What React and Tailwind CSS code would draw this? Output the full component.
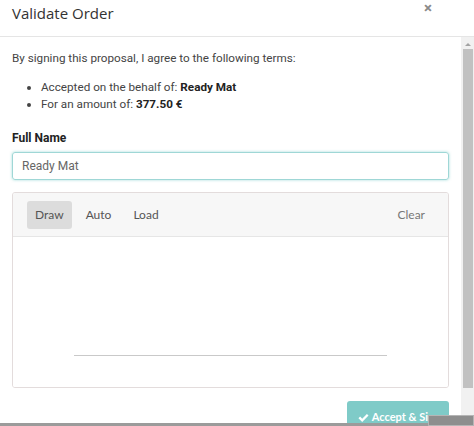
import { useState } from 'react';

function Scrollbar() {
  return (
    <div className="w-[13px] shrink-0 bg-[#f1f1f1] flex flex-col items-center">
      {/* arrow up */}
      <div className="h-[12px] flex items-center justify-center pt-[3px]">
        <div className="w-0 h-0 border-l-[3px] border-r-[3px] border-b-[3px] border-l-transparent border-r-transparent border-b-[#a3a3a3]" />
      </div>
      <div className="w-[10px] h-[339px] bg-[#c1c1c1]" />
    </div>
  );
}

function Bullet({ children }) {
  return (
    <li className="flex items-center">
      <span className="w-[4px] h-[4px] ml-[15px] mr-[10px] rounded-full bg-[#444] shrink-0" />
      <span>{children}</span>
    </li>
  );
}

export default function App() {
  const [mode, setMode] = useState('Draw');
  const [name, setName] = useState('Ready Mat');

  return (
    <div className="relative w-[474px] h-[426px] overflow-hidden bg-white flex flex-col font-['Roboto',sans-serif]">
      {/* header */}
      <div className="h-[37px] shrink-0 flex items-start justify-between border-b border-[#e5e5e5] pl-3 pr-[42px]">
        <h4 className="mt-[2px] text-[15px] leading-[22px] text-[#333] font-['Open_Sans',sans-serif]">
          Validate Order
        </h4>
        <button className="mt-[1px] text-[15px] leading-[15px] font-bold text-[#8a8a8a]">×</button>
      </div>

      <div className="flex flex-1 min-h-0">
        <div className="flex-1 px-3 pt-[12px] text-[11.7px] text-[#444]">
          <p className="leading-[19px]">By signing this proposal, I agree to the following terms:</p>
          <ul className="mt-[11px] leading-[17px]">
            <Bullet>
              Accepted on the behalf of: <b className="text-[#222]">Ready Mat</b>
            </Bullet>
            <Bullet>
              For an amount of: <b className="text-[#222]">377.50 €</b>
            </Bullet>
          </ul>

          <label className="block mt-[16px] leading-[19px] text-[12px] font-bold text-[#222]">Full Name</label>
          <input
            value={name}
            onChange={(e) => setName(e.target.value)}
            className="mt-[4px] w-full h-[28px] px-[9px] rounded-[3px] border border-[#9fd7d6] shadow-[0_0_3px_rgba(102,196,194,0.6)] text-[12px] text-[#666] outline-none"
          />

          <div className="mt-3 border border-[#e3dcdc] rounded-[3px] overflow-hidden">
            <div className="h-[44px] bg-[#f7f7f7] border-b border-[#e6e6e6] flex items-center px-[14px] font-['Lato',sans-serif] text-[12px] text-[#555]">
              {['Draw', 'Auto', 'Load'].map((m) => (
                <button
                  key={m}
                  onClick={() => setMode(m)}
                  className={
                    'h-[28px] px-[8px] mr-[6px] rounded-[3px] ' + (mode === m ? 'bg-[#dcdcdc]' : '')
                  }
                >
                  {m}
                </button>
              ))}
              <button className="ml-auto h-[28px] px-[9px] text-[#777]">Clear</button>
            </div>
            <div className="h-[150px] bg-white pt-[118px]">
              <div className="mx-[61px] h-[1px] bg-[#c9c9c9]" />
            </div>
          </div>

          <div className="mt-[13px] flex justify-end">
            <button className="h-[33px] pl-[11px] pr-[9px] rounded-[3px] bg-[#7fcbc8] text-white text-[11px] font-bold font-['Lato',sans-serif] flex items-center gap-[3px]">
              <svg width="11" height="10" viewBox="0 0 12 10" fill="white">
                <path d="M0.5 5.2 L2.3 3.4 L4.6 5.7 L9.7 0.6 L11.5 2.4 L4.6 9.3 Z" />
              </svg>
              Accept &amp; Sign
            </button>
          </div>
        </div>
        <Scrollbar />
      </div>

      {/* bottom overlay strip */}
      <div className="absolute left-0 right-0 bottom-0 h-[3px] bg-[#9b9b9b]" />
      <div className="absolute right-0 bottom-0 w-[46px] h-[11px] bg-[#8e8e8e] border border-[#b5b5b5]" />
    </div>
  );
}
